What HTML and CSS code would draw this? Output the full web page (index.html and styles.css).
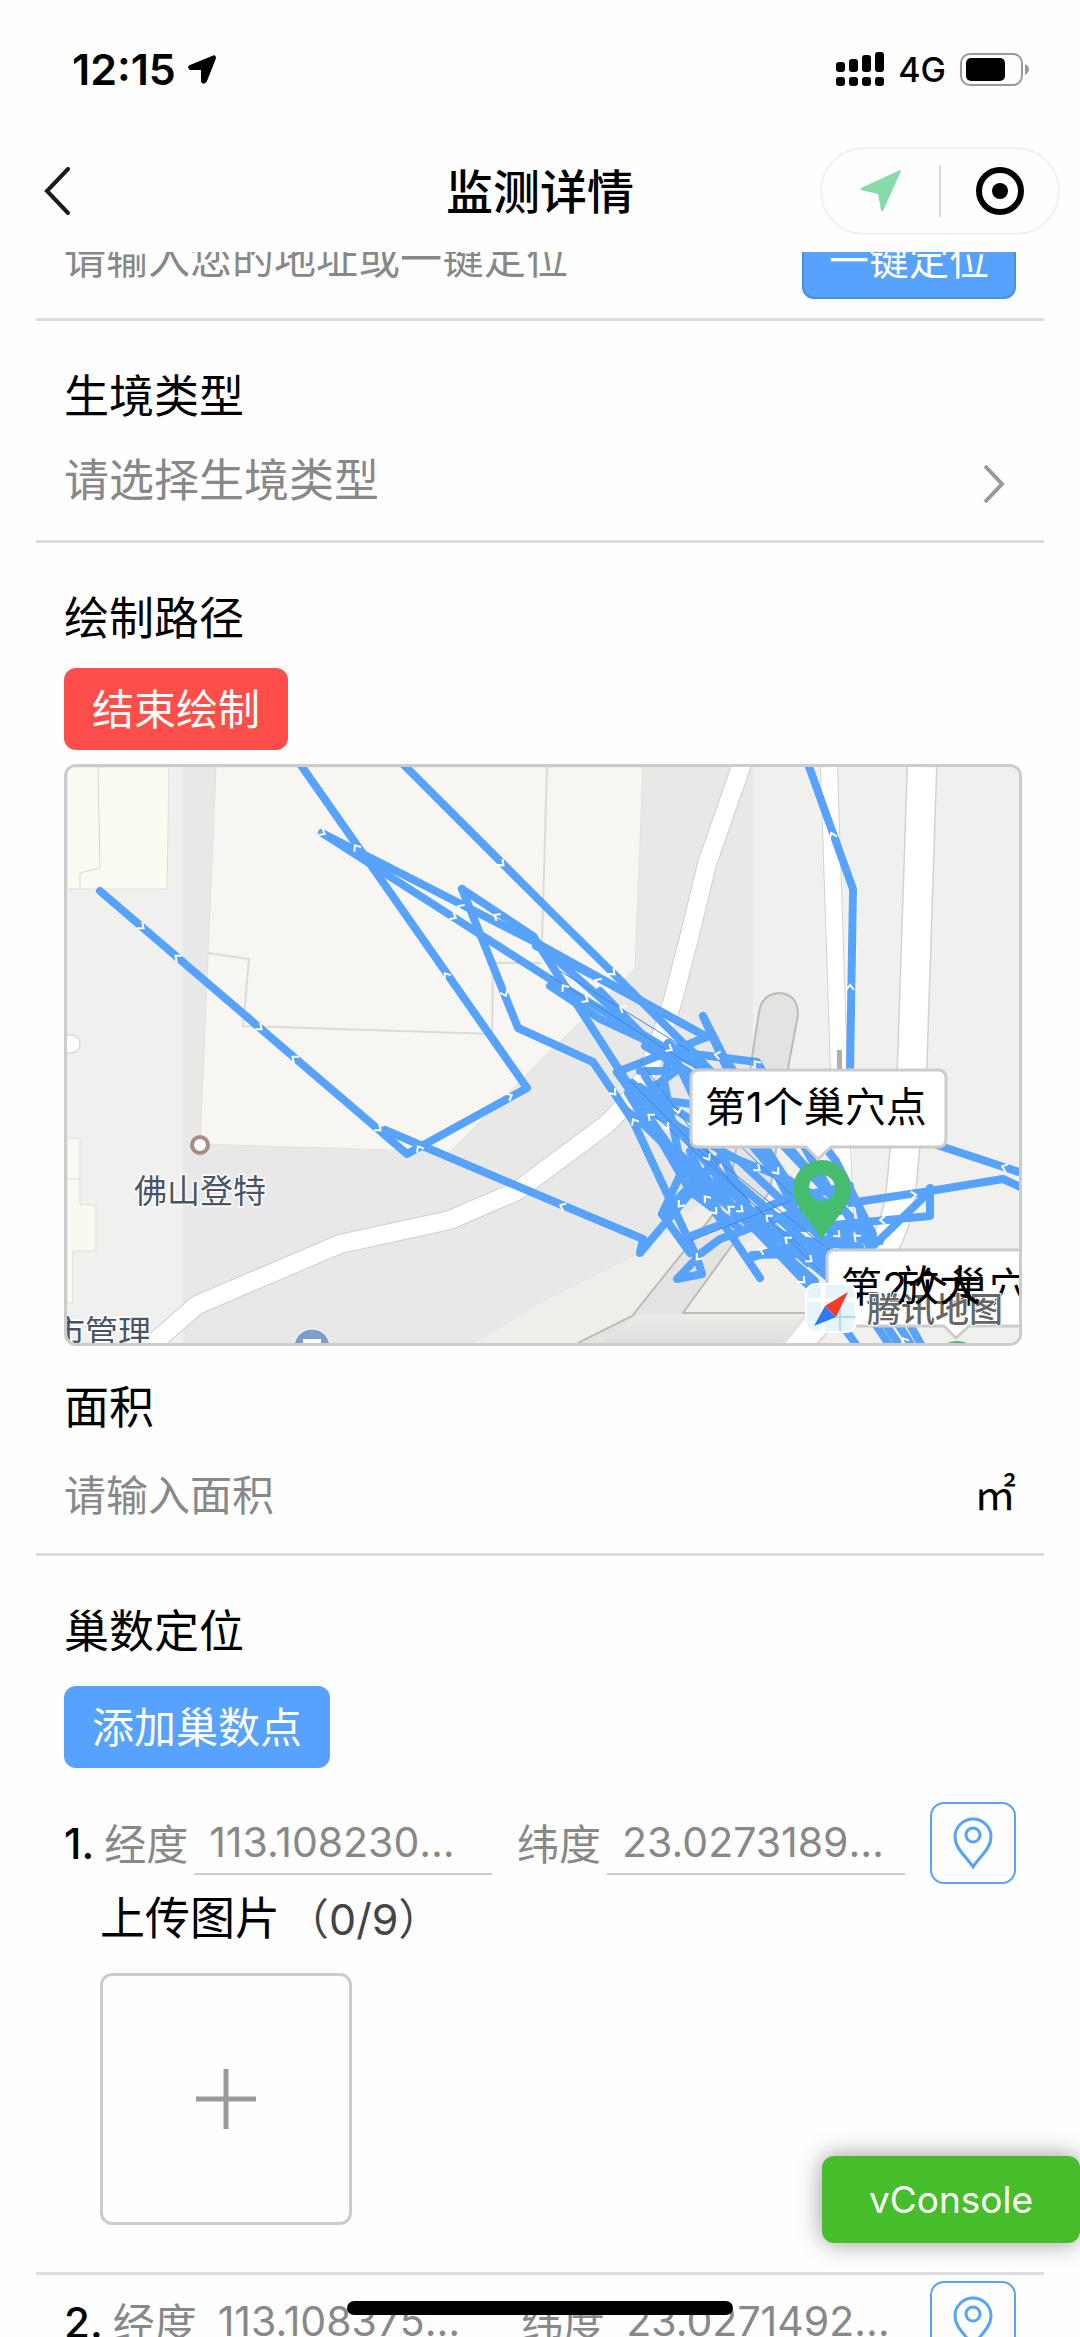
FILE: index.html
```html
<!DOCTYPE html>
<html lang="zh-CN">
  <head>
    <meta charset="UTF-8" />
    <meta name="viewport" content="width=device-width, initial-scale=1.0" />
    <title>监测详情</title>
    <link rel="stylesheet" href="styles.css" />
  </head>
  <body>
    <div class="page">
      <header class="header">
        <div class="status-bar">
          <div class="status-left">
            <span class="time">12:15</span>
            <svg class="icon-location" viewBox="0 0 28 29">
              <path d="M24 1 Q28 -1 28 3 Q27 6 19 26 Q16 31 13 27 L13 15 L2 15 Q-2 12 2 10 Z" />
            </svg>
          </div>
          <div class="status-right">
            <svg class="icon-signal" viewBox="0 0 48 34">
              <rect x="0" y="10" width="9" height="10" rx="3" />
              <rect x="13" y="7" width="9" height="13" rx="3" />
              <rect x="26" y="3" width="9" height="17" rx="3" />
              <rect x="39" y="0" width="9" height="20" rx="3" />
              <rect x="0" y="25" width="9" height="9" rx="3" />
              <rect x="13" y="25" width="9" height="9" rx="3" />
              <rect x="26" y="25" width="9" height="9" rx="3" />
              <rect x="39" y="25" width="9" height="9" rx="3" />
            </svg>
            <span class="network">4G</span>
            <svg class="icon-battery" viewBox="0 0 70 33">
              <rect x="1" y="1" width="61" height="31" rx="9" fill="none" stroke="#999" stroke-width="2" />
              <rect x="6" y="5" width="39" height="23" rx="5" />
              <path d="M65 11 Q69 13 69 16 Q69 20 65 22 Z" fill="#999" />
            </svg>
          </div>
        </div>
        <nav class="nav-bar">
          <button class="back" aria-label="返回">
            <svg viewBox="0 0 26 48">
              <path d="M24 2 L3 24 L24 46" fill="none" stroke="#1a1a1a" stroke-width="4" stroke-linecap="round" />
            </svg>
          </button>
          <h1 class="nav-title">监测详情</h1>
          <div class="capsule">
            <button aria-label="定位">
              <svg class="icon-plane" viewBox="0 0 42 42">
                <path d="M41 1 L23 41 Q22 42 21 40 L18 24 L1 20 Q0 19 1 18 L40 0 Z" fill="#87dba8" />
              </svg>
            </button>
            <span class="capsule-line"></span>
            <button aria-label="关闭">
              <svg class="icon-target" viewBox="0 0 48 48">
                <circle cx="24" cy="24" r="21" fill="none" stroke="#000" stroke-width="6" />
                <circle cx="24" cy="24" r="8" />
              </svg>
            </button>
          </div>
        </nav>
      </header>

      <main class="content">
        <form class="form">
          <section class="form-item address">
            <input class="text-input" type="text" placeholder="请输入您的地址或一键定位" aria-label="地址" />
            <button type="button" class="btn btn-locate">一键定位</button>
          </section>

          <section class="form-item habitat">
            <label class="title" for="habitat">生境类型</label>
            <div class="picker">
              <select id="habitat">
                <option>请选择生境类型</option>
              </select>
              <svg class="icon-arrow" viewBox="0 0 24 40">
                <path d="M3 2 L20 20 L3 38" fill="none" stroke="#999" stroke-width="4" />
              </svg>
            </div>
          </section>

          <section class="form-item draw">
            <h2 class="title">绘制路径</h2>
            <button type="button" class="btn btn-danger">结束绘制</button>
            <div class="map">
              <svg class="map-canvas" viewBox="67 766 952 576" preserveAspectRatio="xMidYMid slice">
                <defs>
                  <path id="dir" d="M-3 -4 L2 0 L-3 4" fill="none" stroke="#fff" stroke-width="2" />
                  <linearGradient id="fade" x1="0" y1="0" x2="0" y2="1">
                    <stop offset="0" stop-color="#ececea" />
                    <stop offset="1" stop-color="#dededd" />
                  </linearGradient>
                </defs>

                <!-- ground and blocks -->
                <rect x="67" y="766" width="952" height="576" fill="#f0f1ee" />
                <rect x="183" y="766" width="570" height="576" fill="#e8e8e9" />
                <path d="M67 766 H169 L167 888 H67 Z" fill="#fcfbf2" stroke="#e2ddd3" />
                <path d="M98 766 L100 867 L80 872 V888" fill="none" stroke="#d8d5cd" />
                <path d="M67 1137 H80 V1204 H96 V1250 H73 V1302 H67 Z" fill="#faf9f0" stroke="#e0ddd3" />
                <path d="M67 1178 H80" stroke="#e0ddd3" />
                <rect x="55" y="1034" width="25" height="18" rx="9" fill="#fff" stroke="#ccc" />
                <path d="M216 766 L200 1143 L450 1151 L550 1050 L635 968 L643 766 Z" fill="#f8f6f2" stroke="#e5e0da" />
                <path d="M208 952 L249 958 L243 1025 L492 1033 L493 962 L542 962 M542 941 L547 766" fill="none" stroke="#dedad5" stroke-width="2" />
                <path d="M475 1342 L540 1302 L640 1252 L735 1175 V1342 Z" fill="#efeeea" />

                <!-- roads -->
                <g fill="none" stroke-linejoin="round">
                  <path d="M150 1345 L197 1304 L340 1243 L450 1219 L517 1190 L607 1123 Q640 1090 650 1065 Q660 1040 673 999 L690 933 L707 863 L743 760" stroke="#cfcfcf" stroke-width="20" />
                  <path d="M150 1345 L197 1304 L340 1243 L450 1219 L517 1190 L607 1123 Q640 1090 650 1065 Q660 1040 673 999 L690 933 L707 863 L743 760" stroke="#fff" stroke-width="18" />
                  <path d="M853 890 L846 1240" stroke="#fafafa" stroke-width="10" />
                  <path d="M829 766 L839 1069 L846 1240" stroke="#d2d2d0" stroke-width="18" />
                  <path d="M829 766 L839 1069 L846 1240" stroke="#fff" stroke-width="16" />
                  <path d="M922 766 L912 1069 L902 1180 Q898 1240 860 1275 L790 1350" stroke="#d2d2d0" stroke-width="31" />
                  <path d="M922 766 L912 1069 L902 1180 Q898 1240 860 1275 L790 1350" stroke="#fff" stroke-width="28" />
                </g>
                <path d="M578 1342 L632 1315 L728 1195 L752 1057 L759 1011 Q762 993 779 992 Q798 993 798 1014 L788 1067 L770 1190 L733 1243 L683 1312 H810 L786 1342 Z" fill="#e3e3e2" />
                <path d="M600 1342 L640 1313 H805 L782 1342 Z" fill="url(#fade)" />
                <path d="M733 1243 L683 1312 H815 L850 1275 V1220 Z" fill="#f0efeb" />
                <path d="M578 1342 L632 1315 L728 1195 L752 1057 L759 1011 Q762 993 779 992 Q798 993 798 1014 L788 1067 L770 1190 L733 1243 L683 1312 H815" fill="none" stroke="#bdbbb4" stroke-width="2" />
                <rect x="837" y="1049" width="5" height="22" fill="#b3adaf" />

                <!-- places -->
                <circle cx="200" cy="1144" r="8" fill="#fff" stroke="#a88b82" stroke-width="4" />
                <circle cx="312" cy="1346" r="18" fill="#7c9fc9" stroke="#fff" />
                <path d="M303 1338 H321 V1345 H303 Z" fill="#fff" />
                <text class="place" x="134" y="1202">佛山登特</text>
                <text class="place" x="52" y="1343">市管理</text>

                <!-- walked track -->
                <g class="track">
                  <path d="M298 760 L527 1087 L407 1153 L100 890 M385 1129 L550 1199 L643 1238 L640 1252 L723 1153" />
                  <path d="M400 760 L550 910 L613 972 L687 1046 L760 1120 L850 1215" />
                  <path d="M322 832 L533 940 L707 1036 L617 1071 L640 1100" />
                  <path d="M322 832 L453 916 L550 978 L670 1050 L757 1061 L775 1090" />
                  <path d="M536 945 L600 978 L707 1036 M550 985 L600 1018 L690 1060 M535 940 L690 1075" />
                  <path d="M462 888 L533 935 L565 985 L627 1081 L690 1190 L743 1230" />
                  <path d="M462 888 L518 1027 L593 1061 L633 1120 L697 1257 L677 1278 L702 1273 L697 1257" />
                  <path d="M703 1015 L725 1058 L770 1120 M703 1015 L760 1140 L800 1220" />
                  <path d="M640 1070 H676 L655 1085 L670 1115 L645 1075 M650 1098 L700 1104" />
                  <path d="M670 1050 L664 1080 L682 1170 L662 1213 L690 1252 M672 1050 L705 1120" />
                  <path d="M662 1213 L723 1153 L787 1178 L840 1210" />
                  <path d="M683 1238 L790 1197 L850 1185 M700 1253 L720 1238 L790 1213 L850 1195" />
                  <path d="M617 1071 L680 1160 L733 1237 L760 1277" />
                  <path d="M627 1110 L700 1170 L807 1283 L840 1310" />
                  <path d="M640 1120 L722 1200 L815 1280 M650 1110 L740 1160 L830 1245" />
                  <path d="M655 1100 L730 1190 L808 1262 M680 1130 L765 1225 L830 1270" />
                  <path d="M700 1140 L735 1215 L800 1240 M715 1140 L750 1210 L820 1262" />
                  <path d="M740 1130 L790 1190 L850 1240 M755 1130 L800 1200 L860 1255" />
                  <path d="M775 1130 L805 1165 L788 1225 L850 1230 M795 1130 L830 1190 L866 1240" />
                  <path d="M750 1257 L807 1240 L860 1246 M752 1254 L810 1253 M735 1180 L830 1262" />
                  <path d="M620 1075 L668 1120 M632 1082 L712 1158 M640 1086 L690 1118 M628 1092 L650 1128 L700 1178" />
                  <path d="M645 1045 L700 1078 M668 1042 L708 1072 M690 1048 L715 1075 M600 990 L660 1052" />
                  <path d="M725 1160 L745 1215 L775 1240 M760 1215 L800 1218 M770 1232 L815 1264 M785 1200 L820 1236" />
                  <path d="M690 1150 L718 1210 M712 1165 L760 1220 L830 1278 M800 1238 L845 1262 M830 1235 L880 1240" />
                  <path d="M807 760 L853 888 L850 1070" />
                  <path d="M820 1140 L836 1160 L873 1233 L868 1250 M870 1250 L860 1210" />
                  <path d="M925 1140 L1025 1173 M1025 1188 L1003 1178 L930 1190 L850 1202" />
                  <path d="M930 1187 V1215 L790 1228 M930 1190 L866 1252" />
                  <path d="M825 1300 L857 1345 M870 1315 L890 1345 M880 1315 L900 1345 M893 1315 L912 1345 M905 1315 L922 1345" />
                </g>
                <g class="track-lines">
                  <path d="M630 1080 L820 1270 M640 1060 L730 1180 M655 1115 L800 1245 M700 1145 L830 1250" />
                  <path d="M550 975 L700 1070 M560 970 L690 1050 M690 1240 L790 1200 M735 1140 L835 1235" />
                </g>
                <g>
                  <use href="#dir" transform="translate(142 926) rotate(40)" />
                  <use href="#dir" transform="translate(177 956) rotate(220)" />
                  <use href="#dir" transform="translate(260 1027) rotate(40)" />
                  <use href="#dir" transform="translate(294 1057) rotate(220)" />
                  <use href="#dir" transform="translate(379 1128) rotate(40)" />
                  <use href="#dir" transform="translate(419 1147) rotate(240)" />
                  <use href="#dir" transform="translate(510 1095) rotate(-28)" />
                  <use href="#dir" transform="translate(446 974) rotate(235)" />
                  <use href="#dir" transform="translate(356 846) rotate(235)" />
                  <use href="#dir" transform="translate(323 832) rotate(30)" />
                  <use href="#dir" transform="translate(502 863) rotate(43)" />
                  <use href="#dir" transform="translate(460 906) rotate(210)" />
                  <use href="#dir" transform="translate(454 916) rotate(30)" />
                  <use href="#dir" transform="translate(496 915) rotate(210)" />
                  <use href="#dir" transform="translate(505 993) rotate(65)" />
                  <use href="#dir" transform="translate(613 972) rotate(43)" />
                  <use href="#dir" transform="translate(597 980) rotate(210)" />
                  <use href="#dir" transform="translate(564 986) rotate(235)" />
                  <use href="#dir" transform="translate(622 1007) rotate(210)" />
                  <use href="#dir" transform="translate(586 999) rotate(30)" />
                  <use href="#dir" transform="translate(670 1048) rotate(30)" />
                  <use href="#dir" transform="translate(717 1054) rotate(190)" />
                  <use href="#dir" transform="translate(756 1062) rotate(230)" />
                  <use href="#dir" transform="translate(614 1092) rotate(50)" />
                  <use href="#dir" transform="translate(678 1110) rotate(80)" />
                  <use href="#dir" transform="translate(650 1115) rotate(220)" />
                  <use href="#dir" transform="translate(667 1126) rotate(45)" />
                  <use href="#dir" transform="translate(634 1120) rotate(240)" />
                  <use href="#dir" transform="translate(562 1205) rotate(202)" />
                  <use href="#dir" transform="translate(680 1204) rotate(130)" />
                  <use href="#dir" transform="translate(706 1197) rotate(230)" />
                  <use href="#dir" transform="translate(715 1211) rotate(50)" />
                  <use href="#dir" transform="translate(730 1207) rotate(220)" />
                  <use href="#dir" transform="translate(741 1209) rotate(40)" />
                  <use href="#dir" transform="translate(708 1157) rotate(60)" />
                  <use href="#dir" transform="translate(758 1168) rotate(40)" />
                  <use href="#dir" transform="translate(777 1171) rotate(50)" />
                  <use href="#dir" transform="translate(768 1216) rotate(220)" />
                  <use href="#dir" transform="translate(787 1238) rotate(220)" />
                  <use href="#dir" transform="translate(762 1249) rotate(200)" />
                  <use href="#dir" transform="translate(810 1259) rotate(40)" />
                  <use href="#dir" transform="translate(803 1280) rotate(45)" />
                  <use href="#dir" transform="translate(838 1234) rotate(45)" />
                  <use href="#dir" transform="translate(856 1236) rotate(220)" />
                  <use href="#dir" transform="translate(882 1219) rotate(180)" />
                  <use href="#dir" transform="translate(914 1194) rotate(-8)" />
                  <use href="#dir" transform="translate(1004 1166) rotate(198)" />
                  <use href="#dir" transform="translate(850 986) rotate(-90)" />
                  <use href="#dir" transform="translate(832 834) rotate(-110)" />
                  <use href="#dir" transform="translate(698 1257) rotate(130)" />
                  <use href="#dir" transform="translate(904 1339) rotate(-120)" />
                </g>

                <!-- nest points -->
                <path class="pin" d="M822 1239 C812 1220 793 1206 793 1188 A29 29 0 0 1 851 1188 C851 1206 832 1220 822 1239 Z M822 1174 A13 13 0 1 0 822 1200 A13 13 0 1 0 822 1174 Z" />
                <circle class="pin" cx="957" cy="1366" r="26" />
                <path class="callout" d="M699 1069 H938 Q946 1069 946 1077 V1138 Q946 1146 938 1146 H831 L818 1158 L806 1146 H699 Q691 1146 691 1138 V1077 Q691 1069 699 1069 Z" />
                <text class="callout-text" x="705" y="1121">第1个巢穴点</text>
                <path class="callout" d="M835 1249 H1074 Q1082 1249 1082 1257 V1317 Q1082 1325 1074 1325 H969 L956 1337 L944 1325 H835 Q827 1325 827 1317 V1257 Q827 1249 835 1249 Z" />
                <text class="callout-text" x="841" y="1301">第2个巢穴点</text>

                <!-- map provider -->
                <rect x="806" y="1283" width="50" height="48" rx="10" fill="#e6f4fc" stroke="#fff" stroke-width="2" />
                <path d="M823 1284 V1330 M807 1299 H855" stroke="#fff" stroke-width="4" />
                <path d="M840 1298 V1330 M830 1316 H855" stroke="#a9dcee" stroke-width="2" />
                <path d="M848 1291 L825 1305 L836 1316 Z" fill="#f43b25" />
                <path d="M814 1325 L825 1305 L836 1316 Z" fill="#2f78f6" />
                <text class="provider" x="867" y="1321">腾讯地图</text>
              </svg>
              <button type="button" class="zoom-btn">放大</button>
            </div>

            <label class="title" for="area">面积</label>
            <div class="area-row">
              <input class="text-input" id="area" type="text" placeholder="请输入面积" />
              <span class="unit">㎡</span>
            </div>
          </section>

          <section class="form-item nests">
            <h2 class="title">巢数定位</h2>
            <button type="button" class="btn btn-add">添加巢数点</button>
            <div class="nest-row">
              <span class="index">1.</span>
              <label for="lng1">经度</label>
              <input id="lng1" type="text" value="113.10823059082031" />
              <label for="lat1">纬度</label>
              <input id="lat1" type="text" value="23.02731895446777" />
              <button type="button" class="pin-btn" aria-label="定位巢穴点 1">
                <svg viewBox="0 0 40 52">
                  <path d="M20 50 C14 40 2 32 2 20 A18 18 0 0 1 38 20 C38 32 26 40 20 50 Z" />
                  <circle cx="20" cy="18" r="7" />
                </svg>
              </button>
            </div>
            <div class="upload">
              <h3 class="title">上传图片<span class="count">（0/9）</span></h3>
              <button type="button" class="upload-btn" aria-label="上传图片">
                <svg viewBox="0 0 60 60">
                  <path d="M30 0 V60 M0 30 H60" stroke="#999" stroke-width="5" />
                </svg>
              </button>
            </div>
          </section>

          <section class="form-item nests-next">
            <div class="nest-row">
              <span class="index">2.</span>
              <label for="lng2">经度</label>
              <input id="lng2" type="text" value="113.10837554931640" />
              <label for="lat2">纬度</label>
              <input id="lat2" type="text" value="23.02714920043945" />
              <button type="button" class="pin-btn" aria-label="定位巢穴点 2">
                <svg viewBox="0 0 40 52">
                  <path d="M20 50 C14 40 2 32 2 20 A18 18 0 0 1 38 20 C38 32 26 40 20 50 Z" />
                  <circle cx="20" cy="18" r="7" />
                </svg>
              </button>
            </div>
          </section>
        </form>
      </main>

      <button class="vconsole">vConsole</button>
      <div class="home-bar"></div>
    </div>
  </body>
</html>
```
FILE: styles.css
```css
* {
  box-sizing: border-box;
}
body {
  margin: 0;
  background: #fefefe;
  color: #000;
  font-family: Inter, 'Noto Sans CJK SC', sans-serif;
}
button,
input,
select {
  font-family: inherit;
  border: none;
  background: none;
  margin: 0;
  padding: 0;
}
button {
  cursor: pointer;
}
svg {
  display: block;
}
.page {
  position: relative;
  height: 100vh;
  overflow: hidden;
}

/* header */
.header {
  position: relative;
  z-index: 2;
  height: 252px;
  background: #fefefe;
}
.status-bar {
  display: flex;
  justify-content: space-between;
  align-items: center;
  height: 138px;
  padding: 0 50px 0 72px;
}
.status-left,
.status-right {
  display: flex;
  align-items: center;
}
.status-left {
  gap: 12px;
}
.status-right {
  gap: 14px;
}
.time {
  font-size: 43px;
  font-weight: 600;
}
.network {
  font-size: 34px;
  font-weight: 500;
}
.icon-location {
  width: 28px;
  height: 29px;
}
.icon-signal {
  width: 48px;
  height: 34px;
}
.icon-battery {
  width: 70px;
  height: 33px;
}
.nav-bar {
  display: flex;
  justify-content: space-between;
  align-items: center;
  padding: 9px 20px 0 44px;
}
.back {
  width: 216px;
}
.back svg {
  width: 26px;
  height: 48px;
}
.nav-title {
  margin: 0;
  padding-bottom: 6px;
  font-size: 47px;
  font-weight: 500;
}
.capsule {
  display: flex;
  align-items: center;
  width: 240px;
  height: 88px;
  border: 2px solid #f0f0f0;
  border-radius: 44px;
}
.capsule button {
  flex: 1;
  display: flex;
  justify-content: center;
}
.capsule-line {
  width: 2px;
  height: 52px;
  background: #ddd;
}
.icon-plane {
  width: 42px;
  height: 42px;
}
.icon-target {
  width: 48px;
  height: 48px;
}

/* form */
.form {
  margin: -35px 36px 0;
}
.form-item {
  padding: 46px 28px 28px;
  border-bottom: 3px solid #ddd;
}
.title {
  display: block;
  margin: 0;
  font-size: 45px;
  font-weight: 400;
  line-height: 60px;
}
.text-input {
  flex: 1;
  min-width: 0;
  height: 60px;
  font-size: 42px;
}
.text-input::placeholder {
  color: #888;
  opacity: 1;
}
.btn {
  display: block;
  height: 82px;
  padding: 0 28px 6px;
  border-radius: 12px;
  background: #57a2fd;
  color: #fff;
  font-size: 42px;
}
.btn-danger {
  margin-top: 19px;
  background: #fd4e49;
}
.btn-add {
  margin-top: 24px;
}
.btn-locate {
  border: 2px solid #4b8fe0;
  font-size: 40px;
  padding: 0 25px;
}
.address {
  display: flex;
  align-items: center;
  padding-top: 0;
  padding-bottom: 19px;
}
.habitat {
  padding-bottom: 30px;
}
.picker {
  display: flex;
  align-items: center;
  margin-top: 23px;
  padding-right: 10px;
}
.picker select {
  flex: 1;
  height: 60px;
  appearance: none;
  color: #888;
  font-size: 45px;
}
.icon-arrow {
  width: 24px;
  height: 40px;
  margin-top: 8px;
}

/* map */
.map {
  position: relative;
  height: 582px;
  margin: 14px -6px 32px 0;
  border: 3px solid #ccc;
  border-radius: 12px;
  overflow: hidden;
}
.map-canvas {
  width: 100%;
  height: 100%;
}
.place {
  fill: #4a5468;
  font-size: 33px;
  paint-order: stroke;
  stroke: #fff;
  stroke-width: 3px;
}
.track {
  fill: none;
  stroke: #57a2fb;
  stroke-width: 8px;
  stroke-linecap: round;
  stroke-linejoin: round;
}
.track-lines {
  fill: none;
  stroke: #3f86dc;
  stroke-width: 1px;
}
.pin {
  fill: #45bc6e;
  fill-rule: evenodd;
}
.callout {
  fill: #fff;
  stroke: #ccc;
  stroke-width: 3px;
}
.callout-text {
  font-size: 41px;
}
.provider {
  fill: #666;
  font-size: 34px;
  font-weight: 500;
  paint-order: stroke;
  stroke: #fff;
  stroke-width: 2px;
}
.zoom-btn {
  position: absolute;
  right: 38px;
  bottom: 27px;
  font-size: 42px;
  line-height: 60px;
}

.area-row {
  display: flex;
  align-items: center;
  margin-top: 27px;
}
.unit {
  font-size: 42px;
  line-height: 60px;
}

/* nest points */
.nests {
  padding-bottom: 47px;
}
.nests .nest-row {
  margin-top: 34px;
}
.nests-next {
  padding-top: 6px;
}
.nest-row {
  display: flex;
  align-items: center;
  font-size: 42px;
}
.nest-row .index {
  margin-right: 10px;
  font-weight: 500;
}
.nest-row label {
  margin-right: 6px;
  padding-bottom: 4px;
  color: #888;
}
.nest-row input {
  flex: 1;
  min-width: 0;
  height: 64px;
  margin-right: 25px;
  padding: 0 15px;
  border-bottom: 2px solid #ccc;
  color: #888;
  font-size: 41px;
  text-overflow: ellipsis;
}
.pin-btn {
  display: flex;
  justify-content: center;
  align-items: center;
  width: 86px;
  height: 82px;
  border: 2px solid #57a2fb;
  border-radius: 14px;
}
.pin-btn svg {
  width: 40px;
  height: 52px;
  fill: none;
  stroke: #57a2fb;
  stroke-width: 3px;
}
.upload {
  padding: 5px 0 0 36px;
}
.count {
  margin-left: 6px;
  color: #444;
  font-size: 43px;
}
.upload-btn {
  display: flex;
  justify-content: center;
  align-items: center;
  width: 252px;
  height: 252px;
  margin-top: 24px;
  border: 3px solid #ccc;
  border-radius: 12px;
}
.upload-btn svg {
  width: 60px;
  height: 60px;
}

.vconsole {
  position: absolute;
  right: 0;
  bottom: 94px;
  width: 258px;
  height: 87px;
  border-radius: 12px;
  background: #46be2c;
  box-shadow: 0 0 24px rgba(0, 0, 0, 0.4);
  color: #fff;
  font-size: 37px;
}
.home-bar {
  position: absolute;
  left: 50%;
  bottom: 22px;
  width: 386px;
  height: 14px;
  border-radius: 7px;
  background: #000;
  transform: translateX(-50%);
}
```
